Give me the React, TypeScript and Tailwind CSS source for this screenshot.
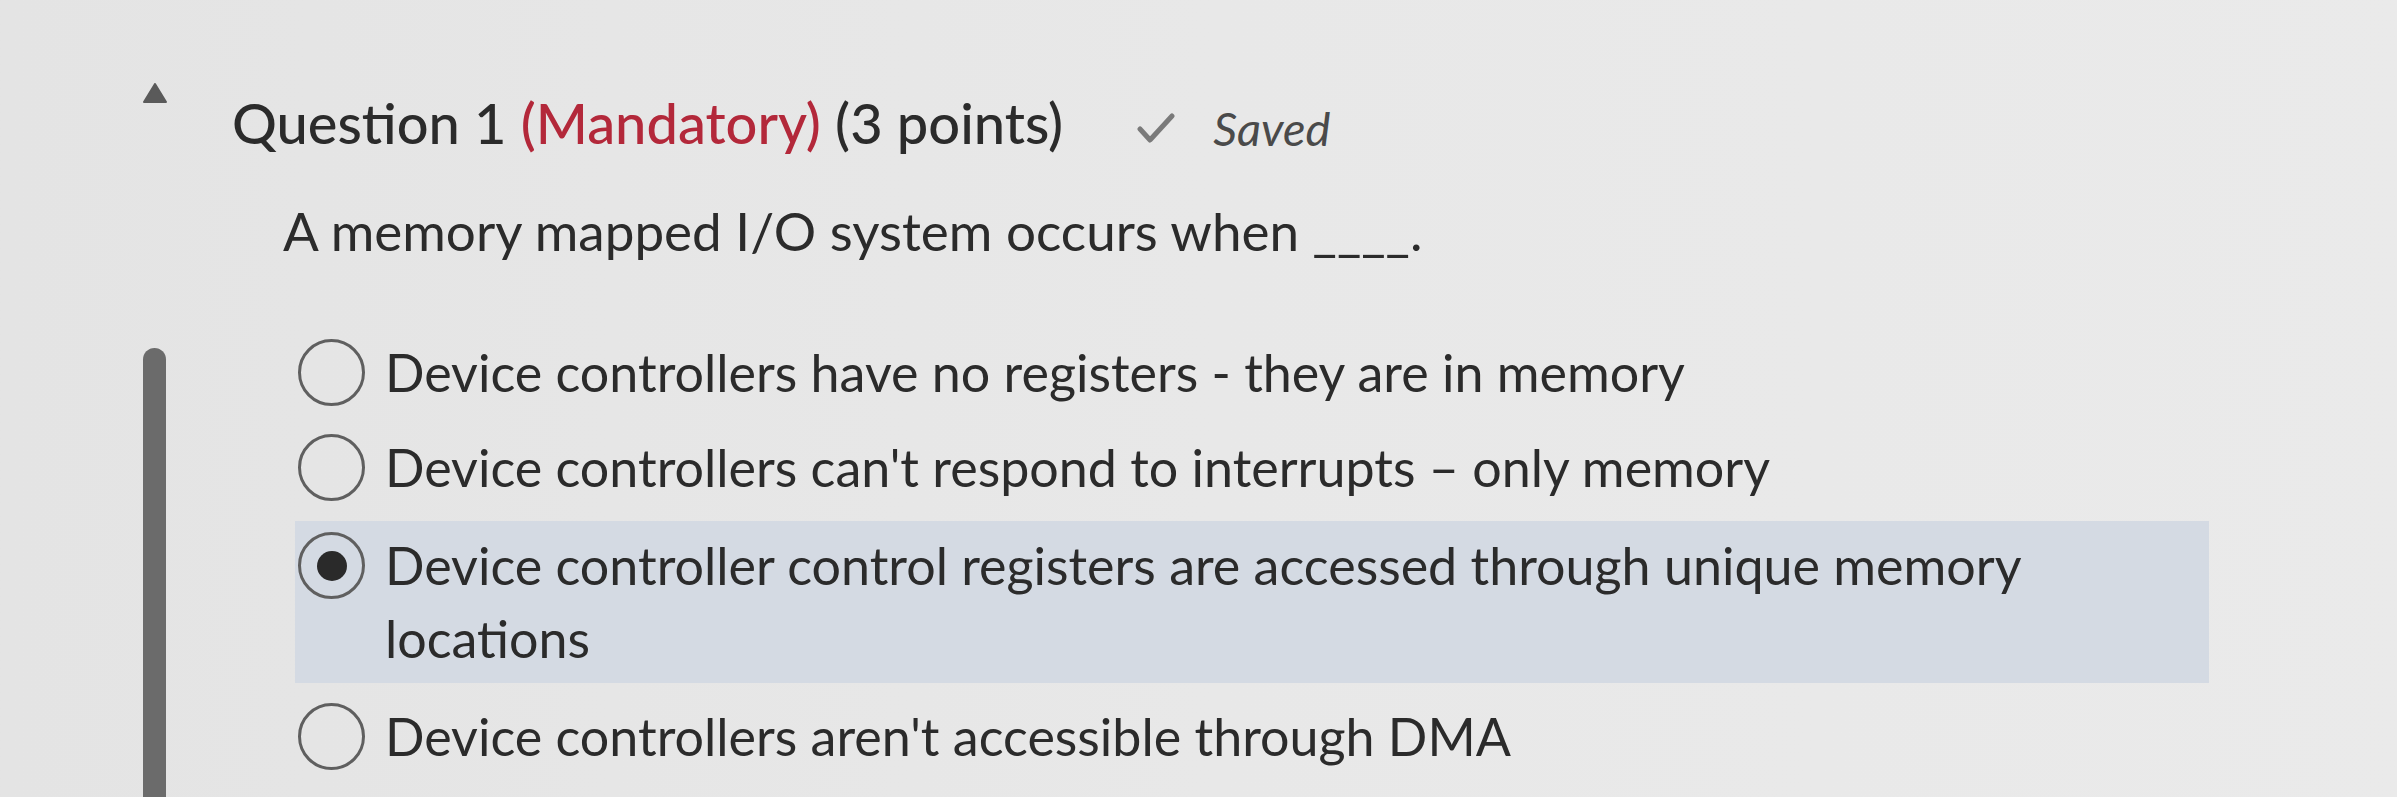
const options = [
  { label: "Device controllers have no registers - they are in memory", selected: false },
  { label: "Device controllers can't respond to interrupts \u2013 only memory", selected: false },
  { label: "Device controller control registers are accessed through unique memory locations", selected: true },
  { label: "Device controllers aren't accessible through DMA", selected: false },
];

function Radio({ checked }: { checked: boolean }) {
  return (
    <span className="mt-[3px] flex h-[67px] w-[67px] shrink-0 items-center justify-center rounded-full border-[3px] border-[#5f5f5f] bg-transparent">
      {checked && <span className="h-[30px] w-[30px] rounded-full bg-[#2a2a2a]" />}
    </span>
  );
}

export default function App() {
  return (
    <div className="min-h-screen overflow-hidden bg-gradient-to-r from-[#e4e4e4] via-[#e8e8e8] to-[#eaeaea] font-['Lato','Noto_Sans',sans-serif] text-[#2b2b2b]">
      <div className="pl-[143px] pt-[83px]">
        <div className="flex items-start">
          <svg className="h-[20px] w-[24px] shrink-0" viewBox="0 0 24 20">
            <path d="M12 1 L23 19 L1 19 Z" fill="#5a5a5a" strokeLinejoin="round" stroke="#5a5a5a" strokeWidth="2" />
          </svg>
          <h2 className="ml-[65px] mt-[5px] text-[56px] leading-[70px] font-medium">
            Question 1 <span className="text-[#b3283a]">(Mandatory)</span> (3 points)
          </h2>
          <div className="ml-[74px] mt-[15px] flex items-center text-[#4a4a4a]">
            <svg className="h-[32px] w-[38px]" viewBox="0 0 38 32" fill="none">
              <path d="M3 17 L13 28 L35 4" stroke="#7a7a7a" strokeWidth="5" strokeLinecap="round" strokeLinejoin="round" />
            </svg>
            <span className="ml-[38px] text-[47px] leading-[60px] italic">Saved</span>
          </div>
        </div>

        <p className="ml-[140px] mt-[38px] text-[53px] leading-[70px]">A memory mapped I/O system occurs when ____.</p>

        <div className="mt-[65px] flex">
          <div className="mt-[17px] w-[23px] shrink-0 rounded-t-full bg-[#6b6b6b]" />
          <ul className="ml-[129px] flex w-[1914px] flex-col gap-[12px] pb-[40px]">
            {options.map((o) => (
              <li
                key={o.label}
                className={`flex items-start pl-[3px] pr-[40px] ${o.selected ? "bg-[#d4dae3] py-[8px]" : "py-[5px]"}`}
              >
                <Radio checked={o.selected} />
                <span className="ml-[20px] max-w-[1700px] text-[52px] leading-[73px]">{o.label}</span>
              </li>
            ))}
          </ul>
        </div>
      </div>
    </div>
  );
}
